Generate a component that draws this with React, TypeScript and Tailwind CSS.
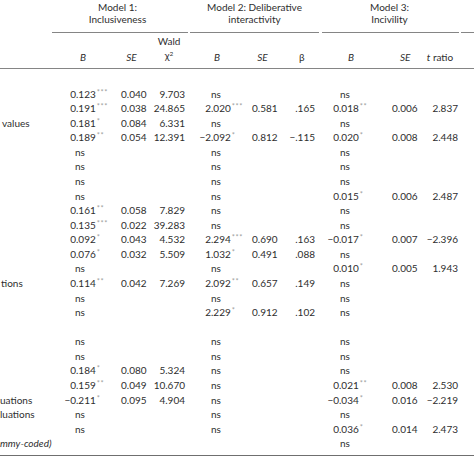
import React from 'react';

type Est = [string, string, string, string]; // B, stars, SE, third stat
type Cell = Est | 'ns' | null;

interface Row {
  label?: string;
  labelCls?: string;
  m1: Cell;
  m2: Cell;
  m3: Cell;
  blank?: boolean;
}

const rows: Row[] = [
  { m1: ['0.123', '***', '0.040', '9.703'], m2: 'ns', m3: 'ns' },
  { m1: ['0.191', '***', '0.038', '24.865'], m2: ['2.020', '***', '0.581', '.165'], m3: ['0.018', '**', '0.006', '2.837'] },
  { label: 'values', labelCls: 'pl-[2px]', m1: ['0.181', '*', '0.084', '6.331'], m2: 'ns', m3: 'ns' },
  { m1: ['0.189', '**', '0.054', '12.391'], m2: ['−2.092', '*', '0.812', '−.115'], m3: ['0.020', '*', '0.008', '2.448'] },
  { m1: 'ns', m2: 'ns', m3: 'ns' },
  { m1: 'ns', m2: 'ns', m3: 'ns' },
  { m1: 'ns', m2: 'ns', m3: 'ns' },
  { m1: 'ns', m2: 'ns', m3: ['0.015', '*', '0.006', '2.487'] },
  { m1: ['0.161', '**', '0.058', '7.829'], m2: 'ns', m3: 'ns' },
  { m1: ['0.135', '***', '0.022', '39.283'], m2: 'ns', m3: 'ns' },
  { m1: ['0.092', '*', '0.043', '4.532'], m2: ['2.294', '***', '0.690', '.163'], m3: ['−0.017', '*', '0.007', '−2.396'] },
  { m1: ['0.076', '*', '0.032', '5.509'], m2: ['1.032', '*', '0.491', '.088'], m3: 'ns' },
  { m1: 'ns', m2: 'ns', m3: ['0.010', '*', '0.005', '1.943'] },
  { label: 'tions', labelCls: 'pl-[1px]', m1: ['0.114', '**', '0.042', '7.269'], m2: ['2.092', '**', '0.657', '.149'], m3: 'ns' },
  { m1: 'ns', m2: 'ns', m3: 'ns' },
  { m1: 'ns', m2: ['2.229', '*', '0.912', '.102'], m3: 'ns' },
  { m1: null, m2: null, m3: null, blank: true },
  { m1: 'ns', m2: 'ns', m3: 'ns' },
  { m1: 'ns', m2: 'ns', m3: 'ns' },
  { m1: ['0.184', '*', '0.080', '5.324'], m2: 'ns', m3: 'ns' },
  { m1: ['0.159', '**', '0.049', '10.670'], m2: 'ns', m3: ['0.021', '**', '0.008', '2.530'] },
  { label: 'uations', m1: ['−0.211', '*', '0.095', '4.904'], m2: 'ns', m3: ['−0.034', '*', '0.016', '−2.219'] },
  { label: 'luations', m1: 'ns', m2: 'ns', m3: 'ns' },
  { m1: 'ns', m2: 'ns', m3: ['0.036', '*', '0.014', '2.473'] },
  { label: 'mmy-coded)', labelCls: 'italic', m1: null, m2: null, m3: 'ns' },
];

function Stars({ s }: { s: string }) {
  return <span className="relative -top-[3px] ml-[1px] text-[7.5px] tracking-[0.6px] text-[#a0a0a0]">{s}</span>;
}

// B value aligned on the decimal point
function BCell({ cell, intW, nsPl }: { cell: Cell; intW: string; nsPl: string }) {
  if (!cell) return <div />;
  if (cell === 'ns') return <div className={nsPl}>ns</div>;
  const [b, stars] = cell;
  const i = b.indexOf('.');
  return (
    <div className="whitespace-nowrap">
      <span className={`inline-block text-right ${intW}`}>{b.slice(0, i)}</span>
      {b.slice(i)}
      <Stars s={stars} />
    </div>
  );
}

function SeCell({ cell, cls }: { cell: Cell; cls: string }) {
  if (!cell || cell === 'ns') return <div />;
  return <div className={cls}>{cell[2]}</div>;
}

function StatCell({ cell, cls }: { cell: Cell; cls: string }) {
  if (!cell || cell === 'ns') return <div />;
  return <div className={`text-right ${cls}`}>{cell[3]}</div>;
}

const cols = 'grid grid-cols-[52px_61px_37px_38px_57px_35px_38px_62px_40px_40px_14px]';

export default function App() {
  return (
    <div
      className="w-[474px] h-[474px] overflow-hidden bg-white text-[10px] text-[#2e2e2e]"
      style={{ fontFamily: 'Lato, "DejaVu Sans", sans-serif' }}
    >
      {/* model titles */}
      <div className={`${cols} h-[33px] leading-[12px]`}>
        <div />
        <div className="col-span-3 border-b border-[#858585] pt-[1px] pr-[5px] text-center">
          Model 1:
          <br />
          Inclusiveness
        </div>
        <div className="col-span-3 ml-[2px] mr-[-1px] border-b border-[#858585] pt-[1px] text-center">
          Model 2: Deliberative
          <br />
          interactivity
        </div>
        <div className="col-span-3 ml-[4px] mr-[1px] border-b border-[#858585] pt-[1px] pr-[2px] text-center">
          Model 3:
          <br />
          Incivility
        </div>
        <div className="ml-[1px] border-b border-[#858585]" />
      </div>

      {/* column heads */}
      <div className={`${cols} h-[36px] items-end border-b border-[#858585] pb-[4px] leading-[14px]`}>
        <div />
        <div className="pl-[28px] italic">B</div>
        <div className="text-center italic">SE</div>
        <div className="text-center">
          Wald
          <br />
          χ<span className="relative -top-[3px] text-[6.5px]">2</span>
        </div>
        <div className="pl-[26px] italic">B</div>
        <div className="text-center italic">SE</div>
        <div className="pl-[19px]">β</div>
        <div className="pl-[30px] italic">B</div>
        <div className="pl-[20px] italic">SE</div>
        <div className="text-center">
          <span className="italic">t</span> ratio
        </div>
        <div />
      </div>

      {/* body */}
      <div className="pt-[17.5px]">
        {rows.map((r, idx) =>
          r.blank ? (
            <div key={idx} className="h-[14.58px]" />
          ) : (
            <div key={idx} className={`${cols} h-[14.58px] leading-[14.58px]`}>
              <div className="whitespace-nowrap">
                {r.label && <span className={`inline-block ${r.labelCls ?? ''}`}>{r.label}</span>}
              </div>
              <BCell cell={r.m1} intW="w-[24px]" nsPl="pl-[23px]" />
              <SeCell cell={r.m1} cls="pl-[8px]" />
              <StatCell cell={r.m1} cls="pr-[3px]" />
              <BCell cell={r.m2} intW="w-[23px]" nsPl="pl-[23px]" />
              <SeCell cell={r.m2} cls="pl-[7px]" />
              <StatCell cell={r.m2} cls="pr-[3px]" />
              <BCell cell={r.m3} intW="w-[21px]" nsPl="pl-[22px]" />
              <SeCell cell={r.m3} cls="pl-[12px]" />
              <StatCell cell={r.m3} cls="pr-[2px]" />
              <div />
            </div>
          )
        )}
      </div>

      <div className="mt-[4.5px] border-t-[1.5px] border-[#6f6f6f]" />
    </div>
  );
}
